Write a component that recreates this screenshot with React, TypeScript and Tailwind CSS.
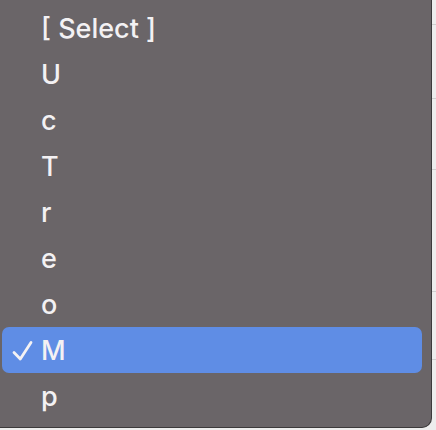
import React from 'react';

const items = ['[ Select ]', 'U', 'c', 'T', 'r', 'e', 'o', 'M', 'p'];
const selected = 'M';

function Check() {
  return (
    <svg width="22" height="22" viewBox="0 0 22 22" className="absolute left-[9px] top-1/2 -translate-y-1/2">
      <path d="M3 13.5 L9.3 20 L20 3.5" fill="none" stroke="#f4f2f4" strokeWidth="2.8" strokeLinecap="round" strokeLinejoin="round" />
    </svg>
  );
}

export default function App() {
  return (
    <div className="w-[436px] h-[430px] overflow-hidden bg-[#ededed] flex" style={{ fontFamily: 'Inter, "Noto Sans", sans-serif' }}>
      {/* popup menu */}
      <div className="w-[432px] h-[428px] shrink-0 bg-[#6a6568] border-r border-b border-[#3c3a3b] rounded-br-[10px] pt-[5px]">
        {items.map((item) => {
          const active = item === selected;
          return (
            <div
              key={item}
              className={`relative h-[46px] ml-[2px] mr-[9px] pl-[39px] flex items-center text-[27px] font-medium leading-none text-[#f3f1f3] rounded-[7px] ${active ? 'bg-[#5f8de5]' : ''}`}
            >
              {active && <Check />}
              <span>{item}</span>
            </div>
          );
        })}
      </div>
      {/* underlying page peeking through */}
      <div className="flex-1 flex flex-col">
        <div className="h-[25px] border-b border-[#cfcfcf]" />
        <div className="h-[74px] border-b border-[#cfcfcf]" />
        <div className="h-[71px] border-b border-[#cfcfcf]" />
        <div className="h-[122px] border-b border-[#cfcfcf]" />
        <div className="h-[68px] border-b border-[#cfcfcf]" />
        <div className="flex-1" />
      </div>
    </div>
  );
}
